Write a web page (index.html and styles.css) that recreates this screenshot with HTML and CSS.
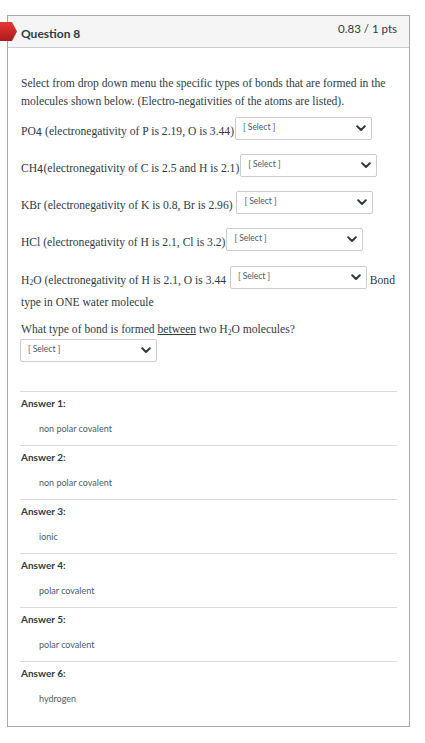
FILE: index.html
```html
<!DOCTYPE html>
<html>
<head>
<meta charset="utf-8">
<link rel="stylesheet" href="styles.css">
</head>
<body>
<div class="flag"></div>
<div class="quiz">
  <div class="header">
    <span class="title">Question 8</span>
    <span class="pts">0.83 / 1 pts</span>
  </div>
  <div class="content">
    <p class="intro">Select from drop down menu the specific types of bonds that are formed in the molecules shown below. (Electro-negativities of the atoms are listed).</p>
    <p class="row r1">PO<span class="num">4</span> (electronegativity of P is 2.19, O is 3.44)<span class="sel"><span class="sel-text">[ Select ]</span><svg class="chev" viewBox="0 0 10 7" width="10" height="7"><path d="M1.2 1.2 L5 5 L8.8 1.2" fill="none" stroke="#2d3b45" stroke-width="2" stroke-linecap="round" stroke-linejoin="round"/></svg></span></p>
    <p class="row">CH<span class="num">4</span>(electronegativity of C is 2.5 and H is 2.1)<span class="sel"><span class="sel-text">[ Select ]</span><svg class="chev" viewBox="0 0 10 7" width="10" height="7"><path d="M1.2 1.2 L5 5 L8.8 1.2" fill="none" stroke="#2d3b45" stroke-width="2" stroke-linecap="round" stroke-linejoin="round"/></svg></span></p>
    <p class="row">KBr (electronegativity of K is 0.8, Br is 2.96) <span class="sel"><span class="sel-text">[ Select ]</span><svg class="chev" viewBox="0 0 10 7" width="10" height="7"><path d="M1.2 1.2 L5 5 L8.8 1.2" fill="none" stroke="#2d3b45" stroke-width="2" stroke-linecap="round" stroke-linejoin="round"/></svg></span></p>
    <p class="row">HCl (electronegativity of H is 2.1, Cl is 3.2)<span class="sel"><span class="sel-text">[ Select ]</span><svg class="chev" viewBox="0 0 10 7" width="10" height="7"><path d="M1.2 1.2 L5 5 L8.8 1.2" fill="none" stroke="#2d3b45" stroke-width="2" stroke-linecap="round" stroke-linejoin="round"/></svg></span></p>
    <p class="row water">H<sub>2</sub>O (electronegativity of H is 2.1, O is 3.44 <span class="sel"><span class="sel-text">[ Select ]</span><svg class="chev" viewBox="0 0 10 7" width="10" height="7"><path d="M1.2 1.2 L5 5 L8.8 1.2" fill="none" stroke="#2d3b45" stroke-width="2" stroke-linecap="round" stroke-linejoin="round"/></svg></span> Bond type in ONE water molecule</p>
    <p class="between">What type of bond is formed <u>between</u> two H<sub>2</sub>O molecules?</p>
    <div class="sel sel-block"><span class="sel-text">[ Select ]</span><svg class="chev" viewBox="0 0 10 7" width="10" height="7"><path d="M1.2 1.2 L5 5 L8.8 1.2" fill="none" stroke="#2d3b45" stroke-width="2" stroke-linecap="round" stroke-linejoin="round"/></svg></div>

    <div class="answers">
      <div class="answer"><div class="a-label">Answer 1:</div><div class="a-value">non polar covalent</div></div>
      <div class="answer"><div class="a-label">Answer 2:</div><div class="a-value">non polar covalent</div></div>
      <div class="answer"><div class="a-label">Answer 3:</div><div class="a-value">ionic</div></div>
      <div class="answer"><div class="a-label">Answer 4:</div><div class="a-value">polar covalent</div></div>
      <div class="answer"><div class="a-label">Answer 5:</div><div class="a-value">polar covalent</div></div>
      <div class="answer"><div class="a-label">Answer 6:</div><div class="a-value">hydrogen</div></div>
    </div>
  </div>
</div>
</body>
</html>
```

FILE: styles.css
```css
html, body {
  margin: 0;
  padding: 0;
  background: #ffffff;
}

body {
  font-family: "Liberation Serif", "Times New Roman", serif;
  color: #2d3b45;
}

.flag {
  position: absolute;
  left: 0;
  top: 22px;
  width: 17px;
  height: 19px;
  background: linear-gradient(#e5393a, #c42525 60%, #a81c1c);
  clip-path: polygon(0 0, 12px 0, 17px 50%, 12px 100%, 0 100%);
  z-index: 2;
}

.quiz {
  margin: 15px 0 0 7px;
  width: 401px;
  border: 1px solid #a9a9a9;
}

.header {
  display: flex;
  justify-content: space-between;
  align-items: flex-start;
  height: 31px;
  background: #f5f5f5;
  border-bottom: 1px solid #c7cdd1;
  padding: 0 12px 0 13px;
  font-family: Lato, "Liberation Sans", sans-serif;
}

.title {
  font-weight: bold;
  font-size: 12px;
  color: #2d3b45;
  margin-top: 10px;
}

.pts {
  font-size: 11.5px;
  color: #2d3b45;
  margin-top: 6px;
}

.content {
  padding: 27px 12px 11px 12px;
}

.intro {
  margin: 0 0 0 1px;
  font-size: 11.6px;
  line-height: 18px;
}

.row {
  margin: 7px 0 0 1px;
  font-size: 11.6px;
  line-height: 18px;
}

.r1 {
  margin-top: 6px;
}

.num {
  font-family: "DejaVu Sans", sans-serif;
  font-size: 10px;
  position: relative;
  top: 1px;
}

sub {
  font-size: 7.5px;
  vertical-align: -1.5px;
  line-height: 0;
}

.sel {
  display: inline-flex;
  justify-content: space-between;
  align-items: center;
  box-sizing: border-box;
  width: 137px;
  height: 23px;
  border: 1px solid #c7cdd1;
  border-radius: 2px;
  background: #fff;
  padding: 0 5px 0 7px;
  vertical-align: middle;
  margin: 0 0 7px 1px;
  font-family: Lato, "Liberation Sans", sans-serif;
}

.sel-text {
  font-size: 8.5px;
  color: #4a5866;
  margin-top: -4px;
}

.chev {
  display: block;
}

.water {
  line-height: 14px;
  margin-top: 8px;
}

.between {
  margin: 11px 0 0 1px;
  font-size: 11.6px;
  line-height: 18px;
}

.sel-block {
  display: flex;
  margin: 0;
}

.answers {
  margin-top: 29px;
  font-family: Lato, "Liberation Sans", sans-serif;
}

.answer {
  border-top: 1px solid #dadada;
  height: 53px;
}

.a-label {
  font-weight: bold;
  font-size: 10px;
  color: #2d3b45;
  line-height: 14px;
  margin-top: 4px;
  padding-left: 1px;
}

.a-value {
  font-size: 9px;
  color: #4c5b68;
  line-height: 14px;
  margin-top: 12px;
  padding-left: 19px;
}
```
